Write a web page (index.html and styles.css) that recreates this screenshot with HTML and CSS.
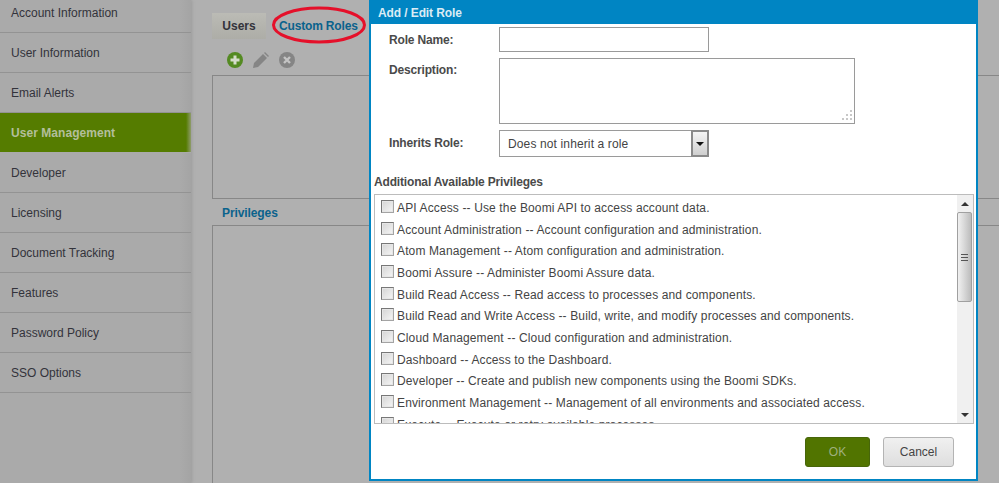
FILE: index.html
```html
<!DOCTYPE html>
<html lang="en">
<head>
<meta charset="utf-8">
<title>Add / Edit Role</title>
<link rel="stylesheet" href="styles.css">
</head>
<body>
<div class="page">
  <nav class="sidebar">
    <a class="nav first">Account Information</a>
    <a class="nav">User Information</a>
    <a class="nav">Email Alerts</a>
    <a class="nav active">User Management</a>
    <a class="nav">Developer</a>
    <a class="nav">Licensing</a>
    <a class="nav">Document Tracking</a>
    <a class="nav">Features</a>
    <a class="nav">Password Policy</a>
    <a class="nav">SSO Options</a>
  </nav>
  <main class="main">
    <div class="tabs">
      <span class="tab current">Users</span>
      <span class="tab link">Custom Roles</span>
    </div>
    <div class="toolbar">
      <svg class="tool" width="16" height="16" viewBox="0 0 16 16"><circle cx="8" cy="8" r="8" fill="#548a22"/><path d="M8 3.5v9M3.5 8h9" stroke="#d5dccb" stroke-width="3"/></svg>
      <svg class="tool" width="16" height="16" viewBox="0 0 16 16"><path d="M0 16l1-5L10 2l4 4-9 9z M11 1l1-1 4 4-1 1z" fill="#858585"/></svg>
      <svg class="tool" width="16" height="16" viewBox="0 0 16 16"><circle cx="8" cy="8" r="8" fill="#858585"/><path d="M5 5l6 6M11 5l-6 6" stroke="#c4c4c4" stroke-width="2.4"/></svg>
    </div>
    <div class="box upper"></div>
    <div class="section-title">Privileges</div>
    <div class="box lower"></div>
  </main>
</div>

<svg class="circle" width="100" height="42" viewBox="0 0 100 42"><ellipse cx="49" cy="20" rx="45.5" ry="17" fill="none" stroke="#e5102a" stroke-width="3"/></svg>

<section class="modal">
  <header class="modal-title">Add / Edit Role</header>
  <form class="form">
    <div class="field name-field">
      <label class="field-label">Role Name:</label>
      <input class="input" type="text">
    </div>
    <div class="field desc-field">
      <label class="field-label">Description:</label>
      <div class="textarea">
        <svg class="grip" width="12" height="12" viewBox="0 0 12 12"><path d="M9 0h2v2H9zM5 4h2v2H5zM9 4h2v2H9zM1 8h2v2H1zM5 8h2v2H5zM9 8h2v2H9z" fill="#c8c8c8"/></svg>
      </div>
    </div>
    <div class="field role-field">
      <label class="field-label">Inherits Role:</label>
      <div class="select">
        <span class="select-value">Does not inherit a role</span>
        <span class="select-btn"><i class="arrow-down"></i></span>
      </div>
    </div>
    <h3 class="list-title">Additional Available Privileges</h3>
    <div class="list">
      <div class="list-items">
        <label class="item"><input type="checkbox" class="check">API Access -- Use the Boomi API to access account data.</label>
        <label class="item"><input type="checkbox" class="check">Account Administration -- Account configuration and administration.</label>
        <label class="item"><input type="checkbox" class="check">Atom Management -- Atom configuration and administration.</label>
        <label class="item"><input type="checkbox" class="check">Boomi Assure -- Administer Boomi Assure data.</label>
        <label class="item"><input type="checkbox" class="check">Build Read Access -- Read access to processes and components.</label>
        <label class="item"><input type="checkbox" class="check">Build Read and Write Access -- Build, write, and modify processes and components.</label>
        <label class="item"><input type="checkbox" class="check">Cloud Management -- Cloud configuration and administration.</label>
        <label class="item"><input type="checkbox" class="check">Dashboard -- Access to the Dashboard.</label>
        <label class="item"><input type="checkbox" class="check">Developer -- Create and publish new components using the Boomi SDKs.</label>
        <label class="item"><input type="checkbox" class="check">Environment Management -- Management of all environments and associated access.</label>
        <label class="item"><input type="checkbox" class="check">Execute -- Execute or retry available processes.</label>
      </div>
      <div class="scrollbar">
        <i class="arrow-up small"></i>
        <div class="thumb"><span class="ridges"></span></div>
        <i class="arrow-down small bottom"></i>
      </div>
    </div>
    <div class="actions">
      <button type="button" class="btn ok">OK</button>
      <button type="button" class="btn cancel">Cancel</button>
    </div>
  </form>
</section>
</body>
</html>
```
FILE: styles.css
```css
* { box-sizing: border-box; }
html, body { margin: 0; height: 483px; overflow: hidden; }
body {
  background: #b0b0b0;
  font: 12px/16px "Liberation Sans", Arial, sans-serif;
  color: #33333b;
  position: relative;
}
.page { display: flex; height: 483px; }

/* Sidebar */
.sidebar {
  width: 191px;
  flex: none;
  background: linear-gradient(to right, #aaaaaa 0, #aaaaaa 180px, #a4a4a4 191px);
  box-shadow: 1px 0 3px #9c9c9c;
  display: flex;
  flex-direction: column;
}
.nav {
  height: 40px;
  flex: none;
  display: flex;
  align-items: center;
  padding: 0 11px;
  border-bottom: 1px solid #939393;
}
.nav.first { height: 33px; padding-bottom: 7px; }
.nav.active {
  background: linear-gradient(to right, #557c00 0, #557c00 186px, #8f9c6c 191px);
  border-bottom: 1px solid #aaaaaa;
  color: #b3bf9b;
  font-weight: bold;
  letter-spacing: 0.05px;
}

/* Main */
.main { flex: 1; padding: 13px 0 0 21px; min-width: 0; }
.tabs { display: flex; height: 26px; align-items: center; }
.tab { font-weight: bold; height: 26px; line-height: 27px; }
.tab.current {
  width: 54px;
  text-align: center;
  background: linear-gradient(#bbbbb5, #adada7);
  color: #33333b;
}
.tab.link { margin-left: 13px; color: #0a628c; letter-spacing: -0.17px; }
.toolbar { display: flex; gap: 10px; padding: 13px 0 0 15px; height: 36px; }
.tool { flex: none; }
.box { border: 1px solid #878787; border-right: 0; background: #b0b0b0; }
.upper { height: 124px; }
.section-title { font-weight: bold; color: #0a628c; padding-left: 10px; height: 26px; line-height: 29px; letter-spacing: -0.1px; }
.lower { height: 260px; }

/* Highlight ring */
.circle { position: absolute; left: 270px; top: 5px; }

/* Modal */
.modal {
  position: absolute;
  left: 369px;
  top: 0;
  width: 609px;
  height: 481px;
  background: #fff;
  border: 2px solid #0085c3;
  border-top: 0;
  display: flex;
  flex-direction: column;
  color: #444;
}
.modal-title {
  height: 24px;
  flex: none;
  background: #0085c3;
  color: #dcecf5;
  font-weight: bold;
  line-height: 26px;
  padding-left: 7px;
  letter-spacing: -0.1px;
}
.form { display: flex; flex-direction: column; flex: 1; margin: 0; padding-left: 3px; }
.field { display: flex; }
.field-label { width: 125px; padding-left: 15px; font-weight: bold; color: #4a4a4a; flex: none; letter-spacing: -0.17px; }
.name-field { margin-top: 3px; height: 25px; }
.name-field .field-label { line-height: 27px; }
.input {
  width: 210px;
  height: 25px;
  border: 1px solid #9a9a9a;
  background: #fff;
  margin: 0;
  padding: 0 4px;
}
.desc-field { margin-top: 6px; height: 66px; }
.desc-field .field-label { padding-top: 4px; }
.textarea {
  width: 356px;
  height: 66px;
  border: 1px solid #9a9a9a;
  display: flex;
  align-items: flex-end;
  justify-content: flex-end;
  padding: 0 1px 1px 0;
}
.grip { display: block; }
.role-field { margin-top: 6px; height: 27px; }
.role-field .field-label { line-height: 27px; }
.select {
  width: 210px;
  height: 27px;
  border: 1px solid #9a9a9a;
  display: flex;
  align-items: center;
  justify-content: space-between;
  padding-left: 8px;
  color: #444;
  letter-spacing: 0.13px;
}
.select-btn {
  width: 18px;
  height: 27px;
  margin-right: -1px;
  border: 2px solid #8a8a8a;
  background: linear-gradient(#f4f4f4, #cfcfcf);
  display: flex;
  align-items: center;
  justify-content: center;
}
.arrow-down {
  display: block;
  width: 0;
  height: 0;
  border-left: 4px solid transparent;
  border-right: 4px solid transparent;
  border-top: 4px solid #111;
}
.arrow-up {
  display: block;
  width: 0;
  height: 0;
  border-left: 4px solid transparent;
  border-right: 4px solid transparent;
  border-bottom: 4px solid #333;
}
.list-title {
  margin: 17px 0 4px;
  font-size: 12px;
  line-height: 16px;
  font-weight: bold;
  color: #4a4a4a;
  letter-spacing: -0.16px;
}
.list {
  width: 600px;
  height: 230px;
  border: 1px solid #bcbcbc;
  display: flex;
  overflow: hidden;
  flex: none;
}
.list-items { flex: 1; padding: 2px 0 0 6px; overflow: hidden; }
.item {
  display: flex;
  align-items: center;
  height: 21.7px;
  white-space: nowrap;
  letter-spacing: 0.13px;
}
.check {
  appearance: none;
  width: 13px;
  height: 13px;
  margin: -3px 3px 0 0;
  flex: none;
  border: 1px solid;
  border-color: #777 #a4a4a4 #a4a4a4 #777;
  background: linear-gradient(135deg, #d4d4d4, #f6f6f6);
  box-shadow: inset 0 0 0 1px #e6e6e6;
}
.scrollbar {
  width: 16px;
  flex: none;
  background: #f0f0f0;
  position: relative;
  display: flex;
  flex-direction: column;
  align-items: center;
}
.arrow-up.small { margin-top: 7px; }
.thumb {
  width: 15px;
  height: 90px;
  margin: 6px 1px 0 0;
  border: 1px solid #a0a0a0;
  border-radius: 2px;
  background: linear-gradient(to right, #f0f0f0, #dcdcdc 40%, #bcbcbc);
  display: flex;
  align-items: center;
  justify-content: center;
}
.ridges { display: block; width: 7px; height: 7px; border-top: 1px solid #555; border-bottom: 1px solid #555; background: linear-gradient(#555, #555) center / 100% 1px no-repeat; }
.arrow-down.small { border-top-color: #333; }
.bottom { margin-top: auto; margin-bottom: 6px; }
.actions { display: flex; justify-content: flex-end; gap: 13px; padding: 13px 22px 0 0; }
.btn {
  height: 30px;
  border-radius: 3px;
  font: 12px "Liberation Sans", Arial, sans-serif;
  margin: 0;
  padding: 0;
}
.ok { width: 65px; background: #517400; border: 1px solid #47660a; color: #9fb07e; }
.cancel { width: 71px; background: linear-gradient(#f0f0f0, #dedede); border: 1px solid #b4b4b4; color: #444; }
```
